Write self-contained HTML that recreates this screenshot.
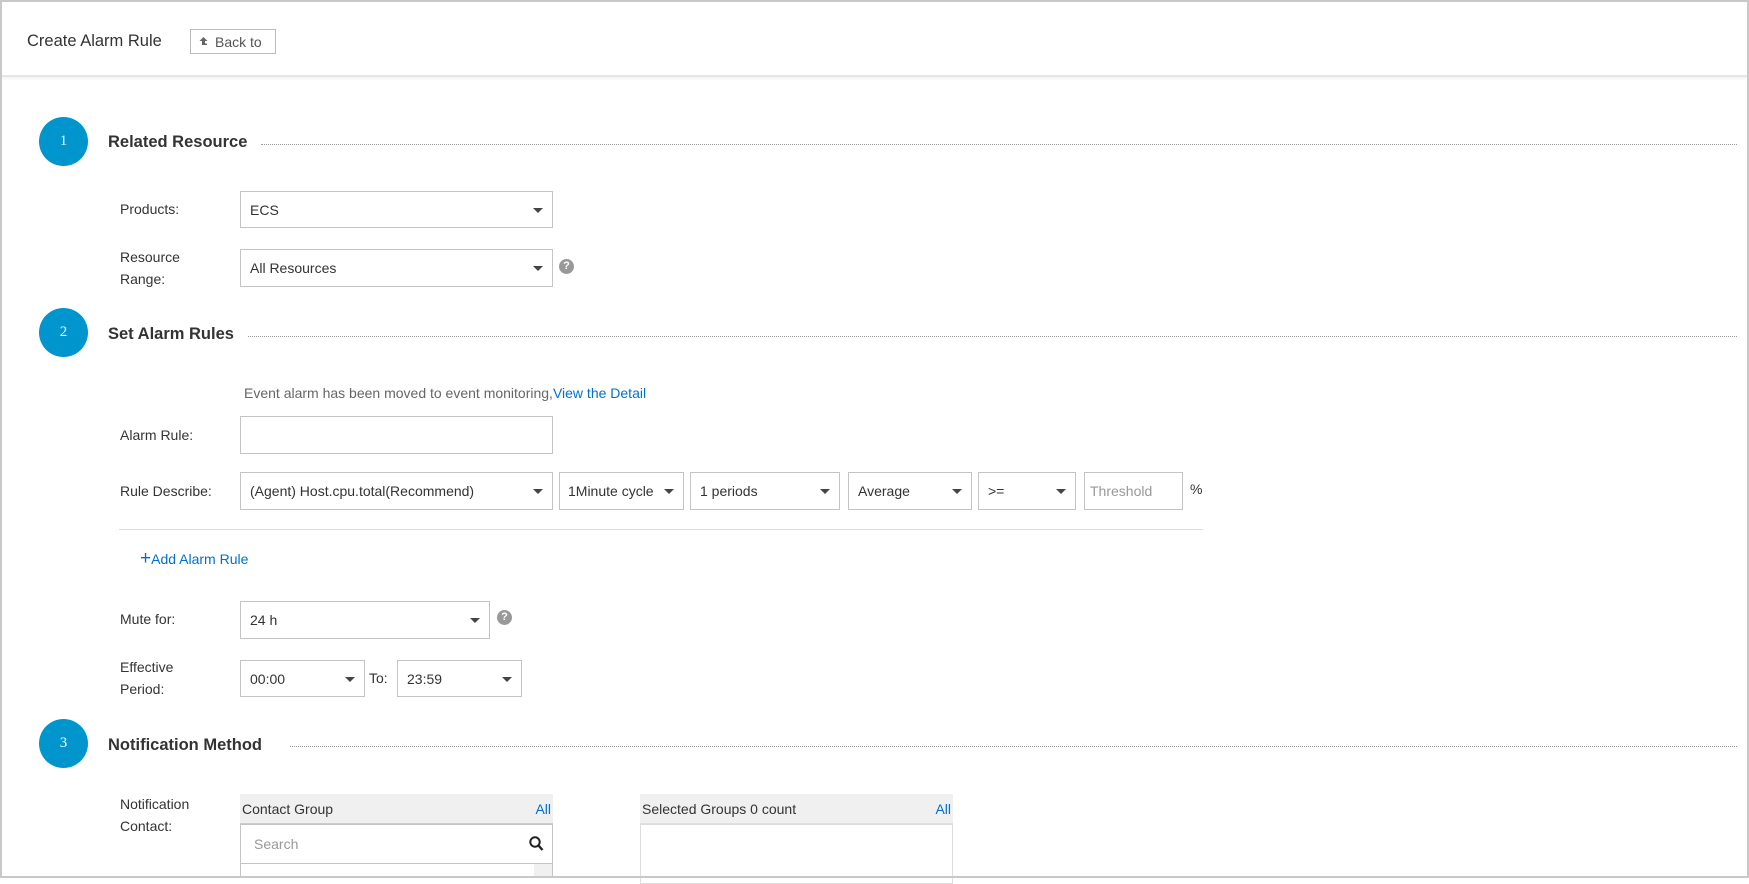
<!DOCTYPE html>
<html><head><meta charset="utf-8"><style>
*{box-sizing:border-box;margin:0;padding:0}
body{width:1749px;height:878px;overflow:hidden;background:#fff;font-family:"Liberation Sans",sans-serif;color:#333;position:relative;font-size:14px}
.frame{position:absolute;left:0;top:0;width:1749px;height:878px;border:2px solid #c8c8c8}
.a{position:absolute;white-space:nowrap}
.hdr{position:absolute;left:2px;top:2px;right:2px;height:75px;border-bottom:2px solid #e6e6e6;box-shadow:0 2px 3px rgba(0,0,0,.05)}
.btn{position:absolute;left:190px;top:29px;width:86px;height:25px;border:1px solid #bbb;font-size:14px;color:#555;padding:4px 0 0 24px}
.circ{position:absolute;left:39px;width:49px;height:49px;border-radius:50%;background:#0095cc;color:#fff;font-family:"Liberation Serif",serif;font-size:15px;text-align:center;line-height:49px}
.st{position:absolute;left:108px;font-weight:bold;font-size:16.5px;color:#333}
.dot{position:absolute;right:12px;border-top:1px dotted #999;height:0}
.sel{position:absolute;border:1px solid #c4c4c4;background:#fff;padding-left:9px;font-size:14px;color:#333;display:flex;align-items:center}
.sel:after{content:"";position:absolute;right:9px;top:50%;margin-top:-2px;border-left:5px solid transparent;border-right:5px solid transparent;border-top:5px solid #444}
.sel.n:after{display:none}
.lbl{position:absolute;left:120px;font-size:14px;color:#333;line-height:22px}
.q{position:absolute;width:15px;height:15px;border-radius:50%;background:#999;color:#fff;font-size:11px;font-weight:bold;text-align:center;line-height:15px}
</style></head><body>
<div class="hdr"></div>
<div class="a" style="left:27px;top:32px;font-size:16.5px;color:#333">Create Alarm Rule</div>
<div class="btn"><svg style="position:absolute;left:7px;top:6px" width="11" height="11" viewBox="0 0 11 11"><path d="M5.5 1 L1.5 5 H4 V9 H9 V7.5 H7 V5 H9.5Z" fill="#666"/></svg>Back to</div>

<div class="circ" style="top:117px">1</div>
<div class="st" style="top:133px">Related Resource</div>
<div class="dot" style="left:261px;top:144px"></div>

<div class="lbl" style="top:198px">Products:</div>
<div class="sel" style="left:240px;top:191px;width:313px;height:37px">ECS</div>
<div class="lbl" style="top:246px">Resource<br>Range:</div>
<div class="sel" style="left:240px;top:249px;width:313px;height:38px">All Resources</div>
<div class="q" style="left:559px;top:259px">?</div>

<div class="circ" style="top:308px">2</div>
<div class="st" style="top:325px">Set Alarm Rules</div>
<div class="dot" style="left:248px;top:336px"></div>

<div class="a" style="left:244px;top:385px;color:#666;font-size:14px">Event alarm has been moved to event monitoring,<span style="color:#0070cc">View the Detail</span></div>
<div class="lbl" style="top:424px">Alarm Rule:</div>
<div class="sel n" style="left:240px;top:416px;width:313px;height:38px"></div>
<div class="lbl" style="top:480px">Rule Describe:</div>
<div class="sel" style="left:240px;top:472px;width:313px;height:38px">(Agent) Host.cpu.total(Recommend)</div>
<div class="sel" style="left:559px;top:472px;width:125px;height:38px;padding-left:8px">1Minute cycle</div>
<div class="sel" style="left:690px;top:472px;width:150px;height:38px">1 periods</div>
<div class="sel" style="left:848px;top:472px;width:124px;height:38px">Average</div>
<div class="sel" style="left:978px;top:472px;width:98px;height:38px">&gt;=</div>
<div class="sel n" style="left:1084px;top:472px;width:99px;height:38px;color:#999;padding-left:5px">Threshold</div>
<div class="a" style="left:1190px;top:481px">%</div>
<div class="a" style="left:119px;top:529px;width:1084px;height:1px;background:#ddd"></div>
<div class="a" style="left:140px;top:551px;color:#0070cc;font-size:14px"><span style="font-size:19px;line-height:14px">+</span>Add Alarm Rule</div>

<div class="lbl" style="top:608px">Mute for:</div>
<div class="sel" style="left:240px;top:601px;width:250px;height:38px">24 h</div>
<div class="q" style="left:497px;top:610px">?</div>
<div class="lbl" style="top:656px">Effective<br>Period:</div>
<div class="sel" style="left:240px;top:660px;width:125px;height:37px">00:00</div>
<div class="a" style="left:369px;top:670px">To:</div>
<div class="sel" style="left:397px;top:660px;width:125px;height:37px">23:59</div>

<div class="circ" style="top:719px">3</div>
<div class="st" style="top:736px">Notification Method</div>
<div class="dot" style="left:290px;top:746px"></div>

<div class="lbl" style="top:793px">Notification<br>Contact:</div>
<div class="a" style="left:240px;top:794px;width:313px;height:30px;background:#f0f0f0;border-bottom:1px solid #ccc;padding:7px 2px;font-size:14px">Contact Group<span style="position:absolute;right:2px;color:#0070cc">All</span></div>
<div class="a" style="left:240px;top:824px;width:313px;height:40px;border:1px solid #c4c4c4;padding:11px 13px;color:#999">Search
<svg style="position:absolute;right:8px;top:11px" width="15" height="16" viewBox="0 0 15 16"><circle cx="6" cy="6" r="4.7" fill="none" stroke="#222" stroke-width="2"/><path d="M9.5 9.5 L13.5 14" stroke="#222" stroke-width="2.4"/></svg></div>
<div class="a" style="left:240px;top:864px;width:313px;height:14px;border-left:1px solid #c4c4c4;border-right:1px solid #c4c4c4"></div>
<div class="a" style="left:534px;top:864px;width:18px;height:14px;background:#f0f0f0"></div>
<div class="a" style="left:640px;top:794px;width:313px;height:30px;background:#f0f0f0;border-bottom:1px solid #e0e0e0;padding:7px 2px;font-size:14px">Selected Groups 0 count<span style="position:absolute;right:2px;color:#0070cc">All</span></div>
<div class="a" style="left:640px;top:824px;width:313px;height:60px;border:1px solid #ddd"></div>
<div class="frame"></div>
</body></html>
